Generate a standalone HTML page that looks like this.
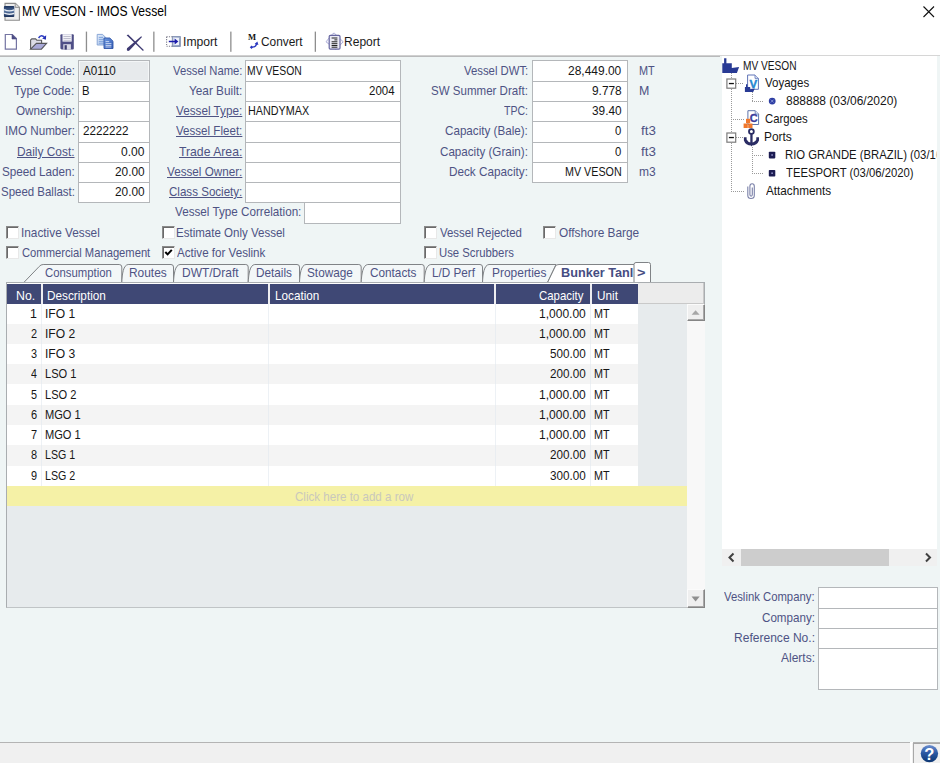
<!DOCTYPE html>
<html lang="en"><head><meta charset="utf-8"><title>MV VESON - IMOS Vessel</title>
<style>
html,body{margin:0;padding:0}
body{width:940px;height:763px;position:relative;overflow:hidden;background:#eff5f5;font-family:"Liberation Sans",sans-serif;}
.t{position:absolute;white-space:pre;line-height:16px;height:16px;}
.b{position:absolute;box-sizing:border-box;}
.in{position:absolute;box-sizing:border-box;border:1px solid #b4b7ba;background:#fff;}
svg{position:absolute;overflow:visible}
</style></head>
<body>
<div class="b" style="left:0px;top:0px;width:940px;height:55px;background:#fff"></div>
<div class="b" style="left:0px;top:55px;width:720px;height:1px;background:#d0d0d0"></div>
<div class="b" style="left:0px;top:56px;width:720px;height:1px;background:#b9babb"></div>
<div class="b" style="left:720px;top:55px;width:220px;height:1px;background:#d6d6d6"></div>
<div class="in" style="left:78px;top:60px;width:72px;height:22px;background:#e7eaec;box-shadow:inset 0 0 0 1px #f4f6f7;"></div>
<div class="in" style="left:78px;top:81px;width:72px;height:21px;"></div>
<div class="in" style="left:78px;top:101px;width:72px;height:21px;"></div>
<div class="in" style="left:78px;top:121px;width:72px;height:22px;"></div>
<div class="in" style="left:78px;top:142px;width:72px;height:21px;"></div>
<div class="in" style="left:78px;top:162px;width:72px;height:21px;"></div>
<div class="in" style="left:78px;top:182px;width:72px;height:21px;"></div>
<div class="in" style="left:245px;top:60px;width:156px;height:22px;"></div>
<div class="in" style="left:245px;top:81px;width:156px;height:21px;"></div>
<div class="in" style="left:245px;top:101px;width:156px;height:21px;"></div>
<div class="in" style="left:245px;top:121px;width:156px;height:22px;"></div>
<div class="in" style="left:245px;top:142px;width:156px;height:21px;"></div>
<div class="in" style="left:245px;top:162px;width:156px;height:21px;"></div>
<div class="in" style="left:245px;top:182px;width:156px;height:21px;"></div>
<div class="in" style="left:304px;top:202px;width:97px;height:22px;"></div>
<div class="in" style="left:532px;top:60px;width:96px;height:22px;"></div>
<div class="in" style="left:532px;top:81px;width:96px;height:21px;"></div>
<div class="in" style="left:532px;top:101px;width:96px;height:21px;"></div>
<div class="in" style="left:532px;top:121px;width:96px;height:22px;"></div>
<div class="in" style="left:532px;top:142px;width:96px;height:21px;"></div>
<div class="in" style="left:532px;top:162px;width:96px;height:21px;"></div>
<div class="in" style="left:818px;top:587px;width:120px;height:22px;"></div>
<div class="in" style="left:818px;top:608px;width:120px;height:21px;"></div>
<div class="in" style="left:818px;top:628px;width:120px;height:21px;"></div>
<div class="in" style="left:818px;top:648px;width:120px;height:42px;"></div>
<div class="b" style="left:722px;top:56px;width:215px;height:493px;background:#fff"></div>
<div class="b" style="left:722px;top:549px;width:215px;height:17px;background:#f0f0f0"></div>
<div class="b" style="left:741px;top:549px;width:148px;height:17px;background:#cdcdcd"></div>
<svg style="left:722px;top:549px" width="216" height="17" viewBox="0 0 216 17"><path d="M11.5 4.5 L7.5 8.5 L11.5 12.5" fill="none" stroke="#404040" stroke-width="2"/><path d="M204 4.5 L208 8.5 L204 12.5" fill="none" stroke="#404040" stroke-width="2"/></svg>
<div class="b" style="left:6px;top:226px;width:13px;height:13px;background:#fff;border-top:1px solid #8a8a8a;border-left:1px solid #8a8a8a;border-right:1px solid #e8e8e8;border-bottom:1px solid #e8e8e8;box-shadow:inset 1px 1px 0 #6a6a6a;"></div>
<div class="b" style="left:162px;top:226px;width:13px;height:13px;background:#fff;border-top:1px solid #8a8a8a;border-left:1px solid #8a8a8a;border-right:1px solid #e8e8e8;border-bottom:1px solid #e8e8e8;box-shadow:inset 1px 1px 0 #6a6a6a;"></div>
<div class="b" style="left:424px;top:226px;width:13px;height:13px;background:#fff;border-top:1px solid #8a8a8a;border-left:1px solid #8a8a8a;border-right:1px solid #e8e8e8;border-bottom:1px solid #e8e8e8;box-shadow:inset 1px 1px 0 #6a6a6a;"></div>
<div class="b" style="left:543px;top:226px;width:13px;height:13px;background:#fff;border-top:1px solid #8a8a8a;border-left:1px solid #8a8a8a;border-right:1px solid #e8e8e8;border-bottom:1px solid #e8e8e8;box-shadow:inset 1px 1px 0 #6a6a6a;"></div>
<div class="b" style="left:6px;top:246px;width:13px;height:13px;background:#fff;border-top:1px solid #8a8a8a;border-left:1px solid #8a8a8a;border-right:1px solid #e8e8e8;border-bottom:1px solid #e8e8e8;box-shadow:inset 1px 1px 0 #6a6a6a;"></div>
<div class="b" style="left:162px;top:246px;width:13px;height:13px;background:#fff;border-top:1px solid #8a8a8a;border-left:1px solid #8a8a8a;border-right:1px solid #e8e8e8;border-bottom:1px solid #e8e8e8;box-shadow:inset 1px 1px 0 #6a6a6a;"></div>
<svg style="left:162px;top:246px" width="13" height="13" viewBox="0 0 13 13"><path d="M3.3 6 L5.6 8.4 L9.8 3.8" fill="none" stroke="#000" stroke-width="2"/></svg>
<div class="b" style="left:424px;top:246px;width:13px;height:13px;background:#fff;border-top:1px solid #8a8a8a;border-left:1px solid #8a8a8a;border-right:1px solid #e8e8e8;border-bottom:1px solid #e8e8e8;box-shadow:inset 1px 1px 0 #6a6a6a;"></div>
<svg style="left:0px;top:0px" width="940" height="300" viewBox="0 0 940 300"><path d="M23.8 282.5 L39.2 266.5 Q40.8 264.5 43.2 264.5 L119.2 264.5 Q121.8 264.5 121.8 267.0 L121.8 282.5" fill="#f3f7f8" stroke="#808386" stroke-width="1"/><path d="M121.8 282.5 C122.2 273.5 123.3 265.1 128.2 264.5 L171.0 264.5 Q173.5 264.5 173.5 267.0 L173.5 282.5" fill="#f3f7f8" stroke="#808386" stroke-width="1"/><path d="M173.5 282.5 C173.9 273.5 175.1 265.1 180.0 264.5 L245.8 264.5 Q248.2 264.5 248.2 267.0 L248.2 282.5" fill="#f3f7f8" stroke="#808386" stroke-width="1"/><path d="M248.2 282.5 C248.7 273.5 249.8 265.1 254.8 264.5 L297.0 264.5 Q299.5 264.5 299.5 267.0 L299.5 282.5" fill="#f3f7f8" stroke="#808386" stroke-width="1"/><path d="M299.5 282.5 C299.9 273.5 301.1 265.1 306.0 264.5 L358.8 264.5 Q361.2 264.5 361.2 267.0 L361.2 282.5" fill="#f3f7f8" stroke="#808386" stroke-width="1"/><path d="M361.2 282.5 C361.6 273.5 362.9 265.1 367.8 264.5 L421.8 264.5 Q424.2 264.5 424.2 267.0 L424.2 282.5" fill="#f3f7f8" stroke="#808386" stroke-width="1"/><path d="M424.2 282.5 C424.6 273.5 425.9 265.1 430.8 264.5 L480.0 264.5 Q482.5 264.5 482.5 267.0 L482.5 282.5" fill="#f3f7f8" stroke="#808386" stroke-width="1"/><path d="M482.5 282.5 C482.9 273.5 484.1 265.1 489 264.5 L556 264.5 L547.5 282.5" fill="#f3f7f8" stroke="#808386"/><path d="M547.5 283.5 L555.5 266.0 Q556.5 264.5 559 264.5 L634 264.5 L634 283.5 Z" fill="#fff" stroke="none"/><path d="M547.5 282.5 L555.5 266.0 Q556.5 264.5 559 264.5 L634 264.5" fill="none" stroke="#808386"/><path d="M634 282.5 L634 264.5 Q634 262.5 636 262.5 L648.5 262.5 Q650.5 262.5 650.5 264.5 L650.5 282.5 Z" fill="#fff" stroke="#808386"/></svg>
<div class="b" style="left:6px;top:282px;width:699px;height:326px;background:#e7ebed;border:1px solid #a9adb0;border-right:none;border-bottom-color:#c0c4c6"></div>
<div class="b" style="left:704px;top:282px;width:1px;height:22px;background:#a9adb0"></div>
<div class="b" style="left:7px;top:283px;width:697px;height:21px;background:#ececec"></div>
<div class="b" style="left:7px;top:283px;width:631px;height:1px;background:#fff"></div>
<div class="b" style="left:7px;top:284px;width:34px;height:20px;background:#3f4875"></div>
<div class="b" style="left:43px;top:284px;width:225px;height:20px;background:#3f4875"></div>
<div class="b" style="left:270px;top:284px;width:224px;height:20px;background:#3f4875"></div>
<div class="b" style="left:496px;top:284px;width:94px;height:20px;background:#3f4875"></div>
<div class="b" style="left:592px;top:284px;width:46px;height:20px;background:#3f4875"></div>
<div class="b" style="left:41px;top:284px;width:2px;height:20px;background:#ededf0"></div>
<div class="b" style="left:268px;top:284px;width:2px;height:20px;background:#ededf0"></div>
<div class="b" style="left:494px;top:284px;width:2px;height:20px;background:#ededf0"></div>
<div class="b" style="left:590px;top:284px;width:2px;height:20px;background:#ededf0"></div>
<div class="b" style="left:638px;top:303px;width:66px;height:1px;background:#c9c9c9"></div>
<div class="b" style="left:703px;top:283px;width:1px;height:21px;background:#c9c9c9"></div>
<div class="b" style="left:7px;top:304px;width:631px;height:20px;background:#fff"></div>
<div class="b" style="left:7px;top:324px;width:631px;height:20px;background:#f4f4f4"></div>
<div class="b" style="left:7px;top:344px;width:631px;height:20px;background:#fff"></div>
<div class="b" style="left:7px;top:364px;width:631px;height:20px;background:#f4f4f4"></div>
<div class="b" style="left:7px;top:384px;width:631px;height:21px;background:#fff"></div>
<div class="b" style="left:7px;top:405px;width:631px;height:20px;background:#f4f4f4"></div>
<div class="b" style="left:7px;top:425px;width:631px;height:20px;background:#fff"></div>
<div class="b" style="left:7px;top:445px;width:631px;height:21px;background:#f4f4f4"></div>
<div class="b" style="left:7px;top:466px;width:631px;height:20px;background:#fff"></div>
<div class="b" style="left:41px;top:304px;width:1px;height:182px;background:rgba(225,232,238,.6)"></div>
<div class="b" style="left:268px;top:304px;width:1px;height:182px;background:rgba(225,232,238,.6)"></div>
<div class="b" style="left:495px;top:304px;width:1px;height:182px;background:rgba(225,232,238,.6)"></div>
<div class="b" style="left:590px;top:304px;width:1px;height:182px;background:rgba(225,232,238,.6)"></div>
<div class="b" style="left:7px;top:486px;width:680px;height:20px;background:#f5f1a6"></div>
<div class="b" style="left:687px;top:304px;width:18px;height:304px;background:#f8f8f8"></div>
<div class="b" style="left:687px;top:304px;width:18px;height:17px;background:#efefef;border-top:1px solid #fbfbfb;border-left:1px solid #fbfbfb;border-right:1px solid #858585;border-bottom:1px solid #858585;box-shadow:inset -1px -1px 0 #a8a8a8;"></div>
<svg style="left:687px;top:304px" width="18" height="17" viewBox="0 0 18 17"><path d="M4.6 10.8 L8.6 6.2 L12.6 10.8 Z" fill="#a6a6a6"/></svg>
<div class="b" style="left:687px;top:589px;width:18px;height:19px;background:#efefef;border-top:1px solid #fbfbfb;border-left:1px solid #fbfbfb;border-right:1px solid #858585;border-bottom:1px solid #858585;box-shadow:inset -1px -1px 0 #a8a8a8;"></div>
<svg style="left:687px;top:589px" width="18" height="19" viewBox="0 0 18 19"><path d="M4.5 7.6 L8.6 12.6 L12.7 7.6 Z" fill="#8e8e8e"/></svg>
<div class="b" style="left:0px;top:742px;width:910px;height:1px;background:#b4b4b4"></div>
<div class="b" style="left:910px;top:742px;width:3px;height:1px;background:#fff"></div>
<div class="b" style="left:913px;top:742px;width:27px;height:1px;background:#b4b4b4"></div>
<div class="b" style="left:0px;top:743px;width:940px;height:20px;background:#f0f0f0"></div>
<div class="b" style="left:910px;top:743px;width:2px;height:20px;background:#fff"></div>
<div class="b" style="left:913px;top:743px;width:27px;height:20px;background:#f0f0f0;border-left:1px solid #a8a8a8;border-top:1px solid #a8a8a8"></div>
<svg style="left:920px;top:744px" width="19" height="19" viewBox="0 0 19 19"><defs><linearGradient id="hg" x1="0" y1="0" x2="0" y2="1"><stop offset="0" stop-color="#6d8fd0"/><stop offset=".45" stop-color="#2c5aa5"/><stop offset="1" stop-color="#0c3672"/></linearGradient></defs><circle cx="9.4" cy="9.6" r="8.7" fill="url(#hg)"/><text x="9.4" y="15.6" text-anchor="middle" font-family="Liberation Sans, sans-serif" font-weight="bold" font-size="16.5" fill="#fff">?</text></svg>
<svg style="left:0px;top:0px" width="940" height="28" viewBox="0 0 940 28"><path d="M923.5 6.5 L934 17 M934 6.5 L923.5 17" stroke="#111" stroke-width="1.1" fill="none"/></svg>
<svg style="left:0px;top:0px" width="400" height="56" viewBox="0 0 400 56"><rect x="85.8" y="31.6" width="1.3" height="20.2" fill="#8e8e8e"/><rect x="153.2" y="31.6" width="1.3" height="20.2" fill="#8e8e8e"/><rect x="230.2" y="31.6" width="1.3" height="20.2" fill="#8e8e8e"/><rect x="314.7" y="31.6" width="1.3" height="20.2" fill="#8e8e8e"/><path d="M5.3 34.5 L12.3 34.5 L16.4 38.6 L16.4 49.2 L5.3 49.2 Z" fill="#fff" stroke="#7474a2" stroke-width="1.2"/><path d="M12 34.5 L12 39 L16.4 39 Z" fill="#4c4c84" stroke="#4c4c84" stroke-width=".6"/><path d="M30.6 49 L30.6 40 L31.8 38.9 L35.6 38.9 L36.8 40.2 L41.6 40.2 L41.6 43.4" fill="#dcdce6" stroke="#5a5a5e" stroke-width="1.1"/><path d="M30.6 49.2 L36.4 43.4 L46.6 43.4 L41.4 49.2 Z" fill="#a9a9d8" stroke="#55555a" stroke-width="1.1"/><path d="M38.6 38 Q41.2 33.6 44.8 37.6" fill="none" stroke="#3040c4" stroke-width="1.5"/><path d="M46.2 35.2 L45.9 39.8 L42.2 38.6 Z" fill="#2430b4"/><path d="M60.4 35.2 Q60.4 34.2 61.4 34.2 L72.8 34.2 Q73.8 34.2 73.8 35.2 L73.8 48.6 Q73.8 49.6 72.8 49.6 L61.6 49.6 L60.4 48.4 Z" fill="#4e4e86"/><rect x="62.5" y="34.2" width="9.2" height="7.4" fill="#f2f2f8"/><rect x="63.5" y="36" width="7.2" height=".9" fill="#b8b8c8"/><rect x="63.5" y="38" width="7.2" height=".9" fill="#b8b8c8"/><rect x="63.5" y="39.9" width="7.2" height=".9" fill="#c4c4d2"/><rect x="63.3" y="44.2" width="7.6" height="5.4" fill="#d9d9e6"/><rect x="64.6" y="45.2" width="2.2" height="4.4" fill="#3c3c70"/><defs><linearGradient id="cp1" x1="0" y1="0" x2="1" y2="1"><stop offset="0" stop-color="#e4eefb"/><stop offset="1" stop-color="#a9c3ea"/></linearGradient><linearGradient id="cp2" x1="0" y1="0" x2="1" y2="1"><stop offset="0" stop-color="#6f9be0"/><stop offset="1" stop-color="#2f57b2"/></linearGradient></defs><path d="M97.2 34.4 L102.6 34.4 L105.6 37.4 L105.6 45 L97.2 45 Z" fill="url(#cp1)" stroke="#7f9fd2" stroke-width=".9"/><path d="M98.8 37.4 h4.2 M98.8 39.4 h5 M98.8 41.4 h5 M98.8 43.2 h5" stroke="#6f95d6" stroke-width=".8"/><path d="M104 38 L109.8 38 L113 41.2 L113 48.5 L104 48.5 Z" fill="url(#cp2)" stroke="#2f55a8" stroke-width=".9"/><path d="M105.6 41.6 h3.6 M105.6 43.6 h5.8 M105.6 45.4 h5.8 M105.6 47 h5.8" stroke="#dfe9fa" stroke-width=".8"/><path d="M126.6 35.2 L128.2 34.4 L143.8 50 L143 51 Z" fill="#3e3a72"/><path d="M127 48.2 L141.2 36.2 L142 37 L129.4 50.6 Q127.6 51.4 126.8 50 Z" fill="#3e3a72"/><defs><linearGradient id="im" x1="0" y1="0" x2="1" y2="1"><stop offset="0" stop-color="#c8d2e6"/><stop offset="1" stop-color="#7f8fb4"/></linearGradient></defs><rect x="172.3" y="36.6" width="8" height="9.8" fill="url(#im)" stroke="#7c8cb0" stroke-width=".9"/><rect x="173.6" y="37.9" width="5.4" height="7.2" fill="#eef2fa"/><path d="M166.5 36.7 h6 M166.5 46.3 h6 M166.6 36.7 v9.6" fill="none" stroke="#7d7d8c" stroke-width="1.1" stroke-dasharray="1.2 1.2"/><path d="M168.8 41.5 h6.4" stroke="#1a1aaa" stroke-width="1.5"/><path d="M174.6 38.6 L178.4 41.5 L174.6 44.4 Z" fill="#1a1aaa"/><text x="248.1" y="39.5" font-family="Liberation Serif, serif" font-weight="bold" font-size="8.6" fill="#111">M</text><path d="M251.6 47.2 Q256.2 47.4 256.6 43.4" fill="none" stroke="#2a38c0" stroke-width="1.3"/><path d="M254.6 44 L257.4 41.4 L258.4 45 Z" fill="#2a38c0"/><path d="M249.8 47.2 L251.6 45.6 L253 47.2 L251.6 48.9 Z" fill="#2a38c0"/><path d="M326 41.8 L333 33.4 L334.6 33.4 L343.2 41.8 L336 49.6 Z" fill="#f4f4fb" stroke="#a4a4d2" stroke-width=".9"/><rect x="329.2" y="35.4" width="10.8" height="13.8" rx="1.2" fill="#ececf6" stroke="#6666a0" stroke-width="1.2"/><path d="M331.6 38 h5.8 M334.4 39.9 h3 M331.6 41.8 h5.8 M331.6 43.7 h5.8 M331.6 45.5 h5.8 M331.6 47.2 h5.8" stroke="#222" stroke-width="1"/></svg>
<svg style="left:0px;top:0px" width="24" height="24" viewBox="0 0 24 24"><defs><linearGradient id="tg" x1="0" y1="0" x2="0" y2="1"><stop offset="0" stop-color="#1e3560"/><stop offset=".5" stop-color="#53709c"/><stop offset="1" stop-color="#1a2f58"/></linearGradient></defs><path d="M5 3.4 L15.4 3.4 L19.4 7.2 L19.4 20.2 L5 20.2 Z" fill="#ededed" stroke="#8c8c8c" stroke-width="1.1"/><path d="M15.2 3.4 L15.2 7.4 L19.4 7.4" fill="#dcdcdc" stroke="#8c8c8c" stroke-width=".9"/><rect x="3.9" y="6.1" width="10.4" height="10.9" rx="1" fill="url(#tg)"/><path d="M4.2 9.6 Q9 12 14.2 9.9 M4.2 13.2 Q9 15.2 14.2 13.4" stroke="#e9eef5" stroke-width="1.3" fill="none"/></svg>
<svg style="left:0px;top:0px" width="940" height="210" viewBox="0 0 940 210"><path d="M731.5 73 V192 M736 83.5 H744 M731 119.5 H744 M736 137.5 H744 M731 191.5 H744" stroke="#9a9a9a" stroke-width="1" stroke-dasharray="1 1" fill="none"/><path d="M752.5 92 V102 M752 101.5 H764 M752.5 147 V174 M752 173.5 H764 M752 155.5 H764" stroke="#9a9a9a" stroke-width="1" stroke-dasharray="1 1" fill="none"/><rect x="726.9" y="79.0" width="8.8" height="9.2" fill="#fff" stroke="#7c7c7c" stroke-width="1.2"/><rect x="728.9" y="82.9" width="5" height="1.3" fill="#111"/><rect x="726.9" y="133.0" width="8.8" height="9.2" fill="#fff" stroke="#7c7c7c" stroke-width="1.2"/><rect x="728.9" y="136.9" width="5" height="1.3" fill="#111"/><path d="M724.1 58.2 H726.4 V63.3 H731.8 V67.9 L739.1 66.9 L736.9 72.9 H722.3 V63.3 H724.1 Z" fill="#283a94"/><path d="M747.6 75 H755 L758.4 78.4 V89.3 H747.6 Z" fill="#fff" stroke="#6074b8" stroke-width="1"/><path d="M755 75 V78.4 H758.4" fill="#dfe5f5" stroke="#6074b8" stroke-width=".8"/><text x="753.4" y="87.8" text-anchor="middle" font-family="Liberation Sans, sans-serif" font-weight="bold" font-size="11.5" fill="#1f86d0" stroke="#1f86d0" stroke-width=".4">V</text><path d="M746 84.2 H747.4 V87 H750.2 V89.2 L754.8 88.6 L753.2 92 H744.9 V87 H746 Z" fill="#283a94"/><circle cx="772.2" cy="101.1" r="3.4" fill="#2c3ca2"/><circle cx="772.2" cy="101.1" r="1" fill="#9aa6e0"/><path d="M770.3 99.2 L774.1 103 M774.1 99.2 L770.3 103" stroke="#6f7cc8" stroke-width=".7"/><path d="M747.9 110.7 H755.2 L758.6 114.1 V124.5 H747.9 Z" fill="#fff" stroke="#5f74ac" stroke-width="1"/><path d="M755.2 110.7 V114.1 H758.6" fill="#dfe5f5" stroke="#5f74ac" stroke-width=".8"/><text x="753.8" y="122.4" text-anchor="middle" font-family="Liberation Sans, sans-serif" font-weight="bold" font-size="11" fill="#3b3b9c" stroke="#3b3b9c" stroke-width=".3">C</text><rect x="746" y="118.8" width="4.2" height="4.4" fill="#f0782c"/><rect x="743.6" y="123.5" width="4.2" height="4.5" fill="#f0782c"/><rect x="748.2" y="123.5" width="4.3" height="4.5" fill="#f0782c"/><circle cx="751.4" cy="131.5" r="2.4" fill="none" stroke="#2a2c64" stroke-width="1.8"/><path d="M750.3 133.8 H752.6 V144 L751.45 146.6 L750.3 144 Z" fill="#2a2c64"/><path d="M743.9 137.2 H746.6 V139.6 Q748 142.6 751.4 142.4 Q755 142.6 756.3 139.6 V137.2 H759 V140.4 Q757.2 145.4 751.4 145.6 Q745.6 145.4 743.9 140.4 Z" fill="#2a2c64"/><rect x="768.8" y="151.8" width="6.5" height="6.6" rx=".8" fill="#1c1c52"/><rect x="771.3" y="154.2" width="1.6" height="1.6" fill="#8e8ec4"/><rect x="768.8" y="170.0" width="6.5" height="6.6" rx=".8" fill="#1c1c52"/><rect x="771.3" y="172.4" width="1.6" height="1.6" fill="#8e8ec4"/><path d="M747.8 186.6 V195.2 Q747.8 198.5 751 198.5 Q754.3 198.5 754.3 195.2 V186.2 Q754.3 183.7 752.1 183.7 Q749.9 183.7 749.9 186.2 V194.6 Q749.9 196.2 751.1 196.2 Q752.3 196.2 752.3 194.6 V187.4" fill="none" stroke="#7a80a8" stroke-width="1.1"/></svg>
<span class="t" id="t0" style="left:21.66px;top:3.00px;font-size:14px;letter-spacing:0.000px;color:#000;transform:scaleX(0.8646);transform-origin:0 0;">MV VESON - IMOS Vessel</span>
<span class="t" id="t1" style="left:183.36px;top:34.00px;font-size:13px;letter-spacing:0.000px;color:#1a1a1a;transform:scaleX(0.9353);transform-origin:0 0;">Import</span>
<span class="t" id="t2" style="left:260.60px;top:34.00px;font-size:13px;letter-spacing:0.000px;color:#1a1a1a;transform:scaleX(0.9144);transform-origin:0 0;">Convert</span>
<span class="t" id="t3" style="left:344.21px;top:34.00px;font-size:13px;letter-spacing:0.000px;color:#1a1a1a;transform:scaleX(0.9259);transform-origin:0 0;">Report</span>
<span class="t" id="t4" style="left:7.79px;top:63.00px;font-size:13px;letter-spacing:0.000px;color:#4e5384;transform:scaleX(0.8749);transform-origin:0 0;">Vessel Code:</span>
<span class="t" id="t5" style="left:14.31px;top:83.00px;font-size:13px;letter-spacing:0.000px;color:#4e5384;transform:scaleX(0.9051);transform-origin:0 0;">Type Code:</span>
<span class="t" id="t6" style="left:15.70px;top:103.00px;font-size:13px;letter-spacing:0.000px;color:#4e5384;transform:scaleX(0.8976);transform-origin:0 0;">Ownership:</span>
<span class="t" id="t7" style="left:4.66px;top:123.00px;font-size:13px;letter-spacing:0.000px;color:#4e5384;transform:scaleX(0.8966);transform-origin:0 0;">IMO Number:</span>
<span class="t" id="t8" style="left:17.41px;top:144.00px;font-size:13px;letter-spacing:0.000px;color:#4e5384;transform:scaleX(0.9150);transform-origin:0 0;text-decoration:underline;">Daily Cost:</span>
<span class="t" id="t9" style="left:2.38px;top:164.00px;font-size:13px;letter-spacing:0.000px;color:#4e5384;transform:scaleX(0.8997);transform-origin:0 0;">Speed Laden:</span>
<span class="t" id="t10" style="left:0.57px;top:184.00px;font-size:13px;letter-spacing:0.000px;color:#4e5384;transform:scaleX(0.8820);transform-origin:0 0;">Speed Ballast:</span>
<span class="t" id="t11" style="left:82.70px;top:63.00px;font-size:13px;letter-spacing:0.000px;color:#161616;transform:scaleX(0.8971);transform-origin:0 0;">A0110</span>
<span class="t" id="t12" style="left:81.92px;top:83.00px;font-size:13px;letter-spacing:0.000px;color:#161616;transform:scaleX(0.8686);transform-origin:0 0;">B</span>
<span class="t" id="t13" style="left:82.55px;top:123.00px;font-size:13px;letter-spacing:0.000px;color:#161616;transform:scaleX(0.8996);transform-origin:0 0;">2222222</span>
<span class="t" id="t14" style="left:120.53px;top:144.00px;font-size:13px;letter-spacing:0.000px;color:#161616;transform:scaleX(0.9277);transform-origin:0 0;">0.00</span>
<span class="t" id="t15" style="left:114.85px;top:164.00px;font-size:13px;letter-spacing:0.000px;color:#161616;transform:scaleX(0.9103);transform-origin:0 0;">20.00</span>
<span class="t" id="t16" style="left:114.85px;top:184.00px;font-size:13px;letter-spacing:0.000px;color:#161616;transform:scaleX(0.9103);transform-origin:0 0;">20.00</span>
<span class="t" id="t17" style="left:172.96px;top:63.00px;font-size:13px;letter-spacing:0.000px;color:#4e5384;transform:scaleX(0.8664);transform-origin:0 0;">Vessel Name:</span>
<span class="t" id="t18" style="left:188.75px;top:83.00px;font-size:13px;letter-spacing:0.000px;color:#4e5384;transform:scaleX(0.9077);transform-origin:0 0;">Year Built:</span>
<span class="t" id="t19" style="left:175.81px;top:103.00px;font-size:13px;letter-spacing:0.000px;color:#4e5384;transform:scaleX(0.9018);transform-origin:0 0;text-decoration:underline;">Vessel Type:</span>
<span class="t" id="t20" style="left:176.44px;top:123.00px;font-size:13px;letter-spacing:0.000px;color:#4e5384;transform:scaleX(0.8913);transform-origin:0 0;text-decoration:underline;">Vessel Fleet:</span>
<span class="t" id="t21" style="left:179.26px;top:144.00px;font-size:13px;letter-spacing:0.000px;color:#4e5384;transform:scaleX(0.9389);transform-origin:0 0;text-decoration:underline;">Trade Area:</span>
<span class="t" id="t22" style="left:166.69px;top:164.00px;font-size:13px;letter-spacing:0.000px;color:#4e5384;transform:scaleX(0.8987);transform-origin:0 0;text-decoration:underline;">Vessel Owner:</span>
<span class="t" id="t23" style="left:169.14px;top:184.00px;font-size:13px;letter-spacing:0.000px;color:#4e5384;transform:scaleX(0.8904);transform-origin:0 0;text-decoration:underline;">Class Society:</span>
<span class="t" id="t24" style="left:175.49px;top:204.00px;font-size:13px;letter-spacing:0.000px;color:#4e5384;transform:scaleX(0.8983);transform-origin:0 0;">Vessel Type Correlation:</span>
<span class="t" id="t25" style="left:246.51px;top:63.00px;font-size:13px;letter-spacing:0.000px;color:#161616;transform:scaleX(0.7974);transform-origin:0 0;">MV VESON</span>
<span class="t" id="t26" style="left:369.38px;top:83.00px;font-size:13px;letter-spacing:0.000px;color:#161616;transform:scaleX(0.8822);transform-origin:0 0;">2004</span>
<span class="t" id="t27" style="left:248.01px;top:103.00px;font-size:13px;letter-spacing:0.000px;color:#161616;transform:scaleX(0.8290);transform-origin:0 0;">HANDYMAX</span>
<span class="t" id="t28" style="left:463.73px;top:63.00px;font-size:13px;letter-spacing:0.000px;color:#4e5384;transform:scaleX(0.8723);transform-origin:0 0;">Vessel DWT:</span>
<span class="t" id="t29" style="left:431.11px;top:83.00px;font-size:13px;letter-spacing:0.000px;color:#4e5384;transform:scaleX(0.8879);transform-origin:0 0;">SW Summer Draft:</span>
<span class="t" id="t30" style="left:503.80px;top:103.00px;font-size:13px;letter-spacing:0.000px;color:#4e5384;transform:scaleX(0.8112);transform-origin:0 0;">TPC:</span>
<span class="t" id="t31" style="left:445.49px;top:123.00px;font-size:13px;letter-spacing:0.000px;color:#4e5384;transform:scaleX(0.8959);transform-origin:0 0;">Capacity (Bale):</span>
<span class="t" id="t32" style="left:440.40px;top:144.00px;font-size:13px;letter-spacing:0.000px;color:#4e5384;transform:scaleX(0.8945);transform-origin:0 0;">Capacity (Grain):</span>
<span class="t" id="t33" style="left:449.29px;top:164.00px;font-size:13px;letter-spacing:0.000px;color:#4e5384;transform:scaleX(0.9025);transform-origin:0 0;">Deck Capacity:</span>
<span class="t" id="t34" style="left:567.98px;top:63.00px;font-size:13px;letter-spacing:0.000px;color:#161616;transform:scaleX(0.9212);transform-origin:0 0;">28,449.00</span>
<span class="t" id="t35" style="left:591.94px;top:83.00px;font-size:13px;letter-spacing:0.000px;color:#161616;transform:scaleX(0.9128);transform-origin:0 0;">9.778</span>
<span class="t" id="t36" style="left:592.30px;top:103.00px;font-size:13px;letter-spacing:0.000px;color:#161616;transform:scaleX(0.9103);transform-origin:0 0;">39.40</span>
<span class="t" id="t37" style="left:614.80px;top:123.00px;font-size:13px;letter-spacing:0.000px;color:#161616;transform:scaleX(0.8700);transform-origin:0 0;">0</span>
<span class="t" id="t38" style="left:614.80px;top:144.00px;font-size:13px;letter-spacing:0.000px;color:#161616;transform:scaleX(0.8700);transform-origin:0 0;">0</span>
<span class="t" id="t39" style="left:565.33px;top:164.00px;font-size:13px;letter-spacing:0.000px;color:#161616;transform:scaleX(0.8251);transform-origin:0 0;">MV VESON</span>
<span class="t" id="t40" style="left:639.46px;top:63.00px;font-size:13px;letter-spacing:0.000px;color:#4e5384;transform:scaleX(0.8371);transform-origin:0 0;">MT</span>
<span class="t" id="t41" style="left:639.49px;top:83.00px;font-size:13px;letter-spacing:0.000px;color:#4e5384;transform:scaleX(0.9532);transform-origin:0 0;">M</span>
<span class="t" id="t42" style="left:641.33px;top:123.00px;font-size:13px;letter-spacing:0.000px;color:#4e5384;transform:scaleX(1.0273);transform-origin:0 0;">ft3</span>
<span class="t" id="t43" style="left:641.33px;top:144.00px;font-size:13px;letter-spacing:0.000px;color:#4e5384;transform:scaleX(1.0273);transform-origin:0 0;">ft3</span>
<span class="t" id="t44" style="left:639.17px;top:164.00px;font-size:13px;letter-spacing:0.000px;color:#4e5384;transform:scaleX(0.9251);transform-origin:0 0;">m3</span>
<span class="t" id="t45" style="left:20.83px;top:225.00px;font-size:13px;letter-spacing:0.000px;color:#4e5384;transform:scaleX(0.9087);transform-origin:0 0;">Inactive Vessel</span>
<span class="t" id="t46" style="left:176.05px;top:225.00px;font-size:13px;letter-spacing:0.000px;color:#4e5384;transform:scaleX(0.8864);transform-origin:0 0;">Estimate Only Vessel</span>
<span class="t" id="t47" style="left:439.60px;top:225.00px;font-size:13px;letter-spacing:0.000px;color:#4e5384;transform:scaleX(0.8786);transform-origin:0 0;">Vessel Rejected</span>
<span class="t" id="t48" style="left:559.28px;top:225.00px;font-size:13px;letter-spacing:0.000px;color:#4e5384;transform:scaleX(0.9116);transform-origin:0 0;">Offshore Barge</span>
<span class="t" id="t49" style="left:22.28px;top:245.00px;font-size:13px;letter-spacing:0.000px;color:#4e5384;transform:scaleX(0.8616);transform-origin:0 0;">Commercial Management</span>
<span class="t" id="t50" style="left:177.42px;top:245.00px;font-size:13px;letter-spacing:0.000px;color:#4e5384;transform:scaleX(0.8926);transform-origin:0 0;">Active for Veslink</span>
<span class="t" id="t51" style="left:438.80px;top:245.00px;font-size:13px;letter-spacing:0.000px;color:#4e5384;transform:scaleX(0.8700);transform-origin:0 0;">Use Scrubbers</span>
<span class="t" id="t52" style="left:44.68px;top:265.00px;font-size:13px;letter-spacing:0.000px;color:#4e5384;transform:scaleX(0.8721);transform-origin:0 0;">Consumption</span>
<span class="t" id="t53" style="left:129.02px;top:265.00px;font-size:13px;letter-spacing:0.000px;color:#4e5384;transform:scaleX(0.9171);transform-origin:0 0;">Routes</span>
<span class="t" id="t54" style="left:182.42px;top:265.00px;font-size:13px;letter-spacing:0.000px;color:#4e5384;transform:scaleX(0.9211);transform-origin:0 0;">DWT/Draft</span>
<span class="t" id="t55" style="left:256.07px;top:265.00px;font-size:13px;letter-spacing:0.000px;color:#4e5384;transform:scaleX(0.9048);transform-origin:0 0;">Details</span>
<span class="t" id="t56" style="left:306.93px;top:265.00px;font-size:13px;letter-spacing:0.000px;color:#4e5384;transform:scaleX(0.9059);transform-origin:0 0;">Stowage</span>
<span class="t" id="t57" style="left:370.22px;top:265.00px;font-size:13px;letter-spacing:0.000px;color:#4e5384;transform:scaleX(0.9057);transform-origin:0 0;">Contacts</span>
<span class="t" id="t58" style="left:432.25px;top:265.00px;font-size:13px;letter-spacing:0.000px;color:#4e5384;transform:scaleX(0.9013);transform-origin:0 0;">L/D Perf</span>
<span class="t" id="t59" style="left:492.25px;top:265.00px;font-size:13px;letter-spacing:0.000px;color:#4e5384;transform:scaleX(0.9193);transform-origin:0 0;">Properties</span>
<span class="t" id="t60" style="left:561.25px;top:265.00px;font-size:13px;letter-spacing:0.000px;color:#464d82;font-weight:bold;transform:scaleX(0.9753);transform-origin:0 0;">Bunker Tanl</span>
<span class="t" id="t61" style="left:637.29px;top:265.00px;font-size:13px;letter-spacing:0.000px;color:#464d82;font-weight:bold;transform:scaleX(1.1168);transform-origin:0 0;">&gt;</span>
<span class="t" id="t62" style="left:15.64px;top:288.00px;font-size:13px;letter-spacing:0.000px;color:#fff;transform:scaleX(0.9482);transform-origin:0 0;">No.</span>
<span class="t" id="t63" style="left:47.16px;top:288.00px;font-size:13px;letter-spacing:0.000px;color:#fff;transform:scaleX(0.9052);transform-origin:0 0;">Description</span>
<span class="t" id="t64" style="left:275.26px;top:288.00px;font-size:13px;letter-spacing:0.000px;color:#fff;transform:scaleX(0.9018);transform-origin:0 0;">Location</span>
<span class="t" id="t65" style="left:538.92px;top:288.00px;font-size:13px;letter-spacing:0.000px;color:#fff;transform:scaleX(0.8767);transform-origin:0 0;">Capacity</span>
<span class="t" id="t66" style="left:596.86px;top:288.00px;font-size:13px;letter-spacing:0.000px;color:#fff;transform:scaleX(0.9047);transform-origin:0 0;">Unit</span>
<span class="t" id="t67" style="left:29.98px;top:306.00px;font-size:13px;letter-spacing:0.000px;color:#161616;transform:scaleX(0.9548);transform-origin:0 0;">1</span>
<span class="t" id="t68" style="left:45.41px;top:306.00px;font-size:13px;letter-spacing:0.000px;color:#161616;transform:scaleX(0.9293);transform-origin:0 0;">IFO 1</span>
<span class="t" id="t69" style="left:538.99px;top:306.00px;font-size:13px;letter-spacing:0.000px;color:#161616;transform:scaleX(0.9249);transform-origin:0 0;">1,000.00</span>
<span class="t" id="t70" style="left:593.94px;top:306.00px;font-size:13px;letter-spacing:0.000px;color:#161616;transform:scaleX(0.8315);transform-origin:0 0;">MT</span>
<span class="t" id="t71" style="left:30.99px;top:326.00px;font-size:13px;letter-spacing:0.000px;color:#161616;transform:scaleX(0.8393);transform-origin:0 0;">2</span>
<span class="t" id="t72" style="left:45.42px;top:326.00px;font-size:13px;letter-spacing:0.000px;color:#161616;transform:scaleX(0.9297);transform-origin:0 0;">IFO 2</span>
<span class="t" id="t73" style="left:538.99px;top:326.00px;font-size:13px;letter-spacing:0.000px;color:#161616;transform:scaleX(0.9249);transform-origin:0 0;">1,000.00</span>
<span class="t" id="t74" style="left:593.94px;top:326.00px;font-size:13px;letter-spacing:0.000px;color:#161616;transform:scaleX(0.8315);transform-origin:0 0;">MT</span>
<span class="t" id="t75" style="left:30.97px;top:346.00px;font-size:13px;letter-spacing:0.000px;color:#161616;transform:scaleX(0.8337);transform-origin:0 0;">3</span>
<span class="t" id="t76" style="left:45.41px;top:346.00px;font-size:13px;letter-spacing:0.000px;color:#161616;transform:scaleX(0.9292);transform-origin:0 0;">IFO 3</span>
<span class="t" id="t77" style="left:549.85px;top:346.00px;font-size:13px;letter-spacing:0.000px;color:#161616;transform:scaleX(0.8981);transform-origin:0 0;">500.00</span>
<span class="t" id="t78" style="left:593.94px;top:346.00px;font-size:13px;letter-spacing:0.000px;color:#161616;transform:scaleX(0.8315);transform-origin:0 0;">MT</span>
<span class="t" id="t79" style="left:30.90px;top:366.00px;font-size:13px;letter-spacing:0.000px;color:#161616;transform:scaleX(0.8147);transform-origin:0 0;">4</span>
<span class="t" id="t80" style="left:44.88px;top:366.00px;font-size:13px;letter-spacing:0.000px;color:#161616;transform:scaleX(0.8540);transform-origin:0 0;">LSO 1</span>
<span class="t" id="t81" style="left:549.85px;top:366.00px;font-size:13px;letter-spacing:0.000px;color:#161616;transform:scaleX(0.8981);transform-origin:0 0;">200.00</span>
<span class="t" id="t82" style="left:593.94px;top:366.00px;font-size:13px;letter-spacing:0.000px;color:#161616;transform:scaleX(0.8315);transform-origin:0 0;">MT</span>
<span class="t" id="t83" style="left:30.97px;top:387.00px;font-size:13px;letter-spacing:0.000px;color:#161616;transform:scaleX(0.8336);transform-origin:0 0;">5</span>
<span class="t" id="t84" style="left:44.80px;top:387.00px;font-size:13px;letter-spacing:0.000px;color:#161616;transform:scaleX(0.8528);transform-origin:0 0;">LSO 2</span>
<span class="t" id="t85" style="left:538.99px;top:387.00px;font-size:13px;letter-spacing:0.000px;color:#161616;transform:scaleX(0.9249);transform-origin:0 0;">1,000.00</span>
<span class="t" id="t86" style="left:593.94px;top:387.00px;font-size:13px;letter-spacing:0.000px;color:#161616;transform:scaleX(0.8315);transform-origin:0 0;">MT</span>
<span class="t" id="t87" style="left:31.03px;top:407.00px;font-size:13px;letter-spacing:0.000px;color:#161616;transform:scaleX(0.8498);transform-origin:0 0;">6</span>
<span class="t" id="t88" style="left:44.58px;top:407.00px;font-size:13px;letter-spacing:0.000px;color:#161616;transform:scaleX(0.8523);transform-origin:0 0;">MGO 1</span>
<span class="t" id="t89" style="left:538.99px;top:407.00px;font-size:13px;letter-spacing:0.000px;color:#161616;transform:scaleX(0.9249);transform-origin:0 0;">1,000.00</span>
<span class="t" id="t90" style="left:593.94px;top:407.00px;font-size:13px;letter-spacing:0.000px;color:#161616;transform:scaleX(0.8315);transform-origin:0 0;">MT</span>
<span class="t" id="t91" style="left:30.99px;top:427.00px;font-size:13px;letter-spacing:0.000px;color:#161616;transform:scaleX(0.8393);transform-origin:0 0;">7</span>
<span class="t" id="t92" style="left:44.58px;top:427.00px;font-size:13px;letter-spacing:0.000px;color:#161616;transform:scaleX(0.8523);transform-origin:0 0;">MGO 1</span>
<span class="t" id="t93" style="left:538.99px;top:427.00px;font-size:13px;letter-spacing:0.000px;color:#161616;transform:scaleX(0.9249);transform-origin:0 0;">1,000.00</span>
<span class="t" id="t94" style="left:593.94px;top:427.00px;font-size:13px;letter-spacing:0.000px;color:#161616;transform:scaleX(0.8315);transform-origin:0 0;">MT</span>
<span class="t" id="t95" style="left:31.00px;top:447.00px;font-size:13px;letter-spacing:0.000px;color:#161616;transform:scaleX(0.8429);transform-origin:0 0;">8</span>
<span class="t" id="t96" style="left:44.54px;top:447.00px;font-size:13px;letter-spacing:0.000px;color:#161616;transform:scaleX(0.8187);transform-origin:0 0;">LSG 1</span>
<span class="t" id="t97" style="left:549.85px;top:447.00px;font-size:13px;letter-spacing:0.000px;color:#161616;transform:scaleX(0.8981);transform-origin:0 0;">200.00</span>
<span class="t" id="t98" style="left:593.94px;top:447.00px;font-size:13px;letter-spacing:0.000px;color:#161616;transform:scaleX(0.8315);transform-origin:0 0;">MT</span>
<span class="t" id="t99" style="left:30.99px;top:468.00px;font-size:13px;letter-spacing:0.000px;color:#161616;transform:scaleX(0.8386);transform-origin:0 0;">9</span>
<span class="t" id="t100" style="left:44.63px;top:468.00px;font-size:13px;letter-spacing:0.000px;color:#161616;transform:scaleX(0.8214);transform-origin:0 0;">LSG 2</span>
<span class="t" id="t101" style="left:549.85px;top:468.00px;font-size:13px;letter-spacing:0.000px;color:#161616;transform:scaleX(0.8981);transform-origin:0 0;">300.00</span>
<span class="t" id="t102" style="left:593.94px;top:468.00px;font-size:13px;letter-spacing:0.000px;color:#161616;transform:scaleX(0.8315);transform-origin:0 0;">MT</span>
<span class="t" id="t103" style="left:295.15px;top:489.00px;font-size:13px;letter-spacing:0.000px;color:#c9c8bd;transform:scaleX(0.8896);transform-origin:0 0;">Click here to add a row</span>
<span class="t" id="t104" style="left:742.73px;top:58.00px;font-size:12.2px;letter-spacing:0.000px;color:#161616;transform:scaleX(0.8330);transform-origin:0 0;">MV VESON</span>
<span class="t" id="t105" style="left:765.40px;top:75.00px;font-size:13px;letter-spacing:0.000px;color:#161616;transform:scaleX(0.8854);transform-origin:0 0;">Voyages</span>
<span class="t" id="t106" style="left:785.84px;top:93.00px;font-size:13px;letter-spacing:0.000px;color:#161616;transform:scaleX(0.9221);transform-origin:0 0;">888888 (03/06/2020)</span>
<span class="t" id="t107" style="left:764.50px;top:111.00px;font-size:13px;letter-spacing:0.000px;color:#161616;transform:scaleX(0.8700);transform-origin:0 0;">Cargoes</span>
<span class="t" id="t108" style="left:764.15px;top:129.00px;font-size:13px;letter-spacing:0.000px;color:#161616;transform:scaleX(0.9175);transform-origin:0 0;">Ports</span>
<span class="t" id="t109" style="left:785.00px;top:147.00px;font-size:13px;letter-spacing:0.000px;color:#161616;transform:scaleX(0.8700);transform-origin:0 0;width:174.1px;overflow:hidden;">RIO GRANDE (BRAZIL) (03/16/2020)</span>
<span class="t" id="t110" style="left:785.76px;top:165.00px;font-size:13px;letter-spacing:0.000px;color:#161616;transform:scaleX(0.8683);transform-origin:0 0;">TEESPORT (03/06/2020)</span>
<span class="t" id="t111" style="left:765.56px;top:183.00px;font-size:13px;letter-spacing:0.000px;color:#161616;transform:scaleX(0.9025);transform-origin:0 0;">Attachments</span>
<span class="t" id="t112" style="left:723.60px;top:589.00px;font-size:13px;letter-spacing:0.000px;color:#4e5384;transform:scaleX(0.8700);transform-origin:0 0;">Veslink Company:</span>
<span class="t" id="t113" style="left:762.03px;top:610.00px;font-size:13px;letter-spacing:0.000px;color:#4e5384;transform:scaleX(0.8948);transform-origin:0 0;">Company:</span>
<span class="t" id="t114" style="left:734.03px;top:630.00px;font-size:13px;letter-spacing:0.000px;color:#4e5384;transform:scaleX(0.9266);transform-origin:0 0;">Reference No.:</span>
<span class="t" id="t115" style="left:781.24px;top:650.00px;font-size:13px;letter-spacing:0.000px;color:#4e5384;transform:scaleX(0.9222);transform-origin:0 0;">Alerts:</span>
</body></html>
